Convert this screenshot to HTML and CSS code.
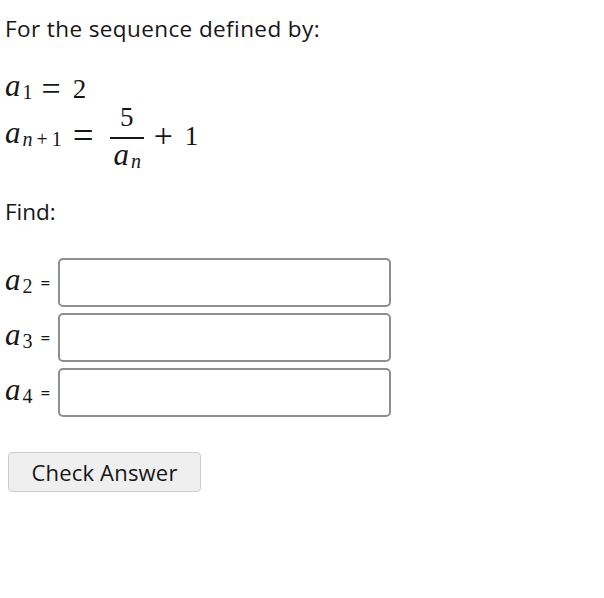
FILE: index.html
```html
<!DOCTYPE html>
<html>
<head>
<meta charset="utf-8">
<link rel="stylesheet" href="styles.css">
</head>
<body>
<div class="page">
  <p class="intro">For the sequence defined by:</p>
  <div class="math-block">
    <div class="mrow first">
      <span class="grp lhs"><span class="mi big">a</span><span class="sub">1</span></span>
      <span class="mo eq1">=</span>
      <span class="mn">2</span>
    </div>
    <div class="mrow second">
      <span class="grp lhs"><span class="mi big">a</span><span class="sub"><span class="mi">n</span><span class="sp">+</span>1</span></span>
      <span class="mo eq2">=</span>
      <span class="frac">
        <span class="num">5</span>
        <span class="den"><span class="mi big">a</span><span class="sub"><span class="mi">n</span></span></span>
      </span>
      <span class="mo plus">+</span>
      <span class="mn">1</span>
    </div>
  </div>
  <p class="find">Find:</p>
  <div class="answers">
    <div class="answer-row">
      <span class="label"><span class="grp"><span class="mi big">a</span><span class="sub">2</span></span><span class="eq">=</span></span>
      <input class="answer" type="text">
    </div>
    <div class="answer-row">
      <span class="label"><span class="grp"><span class="mi big">a</span><span class="sub">3</span></span><span class="eq">=</span></span>
      <input class="answer" type="text">
    </div>
    <div class="answer-row">
      <span class="label"><span class="grp"><span class="mi big">a</span><span class="sub">4</span></span><span class="eq">=</span></span>
      <input class="answer" type="text">
    </div>
  </div>
  <button class="check">Check Answer</button>
</div>
</body>
</html>
```
FILE: styles.css
```css
html, body {
  margin: 0;
  padding: 0;
  background: #fff;
}
.page {
  padding: 14px 5px 0 5px;
  font-family: "Open Sans", sans-serif;
  color: #161616;
}
.intro {
  font-size: 22.5px;
  line-height: 30px;
  letter-spacing: 0.4px;
  margin: 0;
}
.math-block {
  margin-top: 31px;
  font-family: "Liberation Serif", serif;
  font-size: 27px;
  line-height: 28px;
}
.mrow {
  display: flex;
  align-items: center;
}
.mrow.first {
  height: 28px;
}
.mrow.second {
  height: 70px;
  margin-top: -2px;
}
.grp {
  display: inline-block;
  white-space: nowrap;
}
.mi {
  font-style: italic;
}
.mi.big {
  font-size: 31px;
}
.sub {
  font-size: 20px;
  vertical-align: -3px;
  margin-left: 2px;
}
.sub .sp {
  margin: 0 4px 0 4px;
}
.mo {
  font-size: 32px;
}
.eq1 {
  margin: 0 12px 0 9px;
  font-size: 34px;
}
.eq2 {
  margin: 0 16px 0 11px;
  font-size: 37px;
}
.frac {
  display: inline-flex;
  flex-direction: column;
  align-items: center;
  width: 34px;
}
.num {
  align-self: stretch;
  text-align: center;
  height: 36px;
  line-height: 32px;
  border-bottom: 2px solid #161616;
}
.den {
  height: 32px;
  line-height: 32px;
  padding-left: 1px;
}
.plus {
  margin: 0 12px 0 10px;
  font-size: 34px;
}
.find {
  font-size: 22.5px;
  line-height: 30px;
  margin: 26px 0 0 0;
}
.answers {
  margin-top: 31px;
  display: flex;
  flex-direction: column;
  gap: 6px;
}
.answer-row {
  display: flex;
  align-items: center;
}
.label {
  width: 53px;
  font-family: "Liberation Serif", serif;
  font-size: 27px;
  line-height: 28px;
  display: inline-flex;
  align-items: center;
}
.label .eq {
  font-family: "Open Sans", sans-serif;
  font-size: 17px;
  margin-left: 8px;
}
.answer {
  width: 333px;
  height: 49px;
  box-sizing: border-box;
  border: 2px solid #8e8e8e;
  border-radius: 5px;
  background: #fff;
  margin: 0;
}
.check {
  margin: 35px 0 0 3px;
  width: 193px;
  height: 40px;
  box-sizing: border-box;
  border: 1px solid #cbcbcb;
  border-radius: 4px;
  background: #efefef;
  font-family: "Open Sans", sans-serif;
  font-size: 22px;
  letter-spacing: 0.2px;
  color: #161616;
  padding: 0;
}
```
